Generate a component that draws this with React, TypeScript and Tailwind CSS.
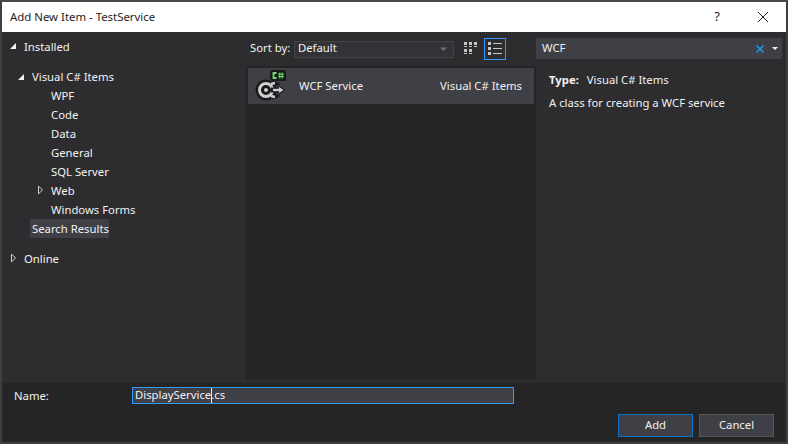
function Arrow({ open }: { open?: boolean }) {
  if (open) {
    return (
      <svg width="8" height="8" viewBox="0 0 8 8" className="block">
        <path d="M7 1V7H1Z" fill="#f1f1f1" />
      </svg>
    )
  }
  return (
    <svg width="8" height="10" viewBox="0 0 8 10" className="block">
      <path d="M2.5 1.2L6.5 5L2.5 8.8Z" fill="none" stroke="#d0d0d0" />
    </svg>
  )
}

function TreeItem({ label, arrow }: { label: string; arrow?: boolean }) {
  return (
    <div className="flex h-[19px] items-center pl-[49px] pt-[2px] relative">
      {arrow && (
        <span className="absolute left-[34px] top-[4px]">
          <Arrow />
        </span>
      )}
      {label}
    </div>
  )
}

function WcfIcon() {
  return (
    <svg width="32" height="32" viewBox="0 0 32 32">
      <rect x="16" y="0" width="17" height="11" rx="3" fill="#1a1a1a" />
      <path d="M22.5 3H19.5V8H22.5" fill="none" stroke="#6fe06f" strokeWidth="1.8" />
      <path d="M24 4.2H30M24 6.6H30M25.8 2.5V8.5M28.2 2.5V8.5" stroke="#6fe06f" strokeWidth="1" />
      <circle cx="12" cy="20" r="10.5" fill="#1a1a1a" />
      <path d="M18 12L22 14L18 16M18 28L22 26L18 24" fill="none" stroke="#1a1a1a" strokeWidth="4" />
      <circle cx="12" cy="20" r="6.5" fill="none" stroke="#cfcfcf" strokeWidth="3" />
      <circle cx="12" cy="20" r="2" fill="#cfcfcf" />
      <path d="M17 14L21 13M17 26L21 27" stroke="#cfcfcf" strokeWidth="2.6" />
      <path d="M17 20H26" stroke="#1a1a1a" strokeWidth="5" />
      <path d="M19 20H26" stroke="#cfcfcf" strokeWidth="2.4" />
      <path d="M25 15.5L31 20L25 24.5Z" fill="#1a1a1a" />
      <path d="M25 17L29.5 20L25 23Z" fill="#cfcfcf" />
    </svg>
  )
}

export default function App() {
  return (
    <div className="w-[788px] h-[444px] flex flex-col border-2 border-[#3f3f41] border-t-[#4a4a4a] bg-[#2d2d30] text-[#f1f1f1] text-[11.3px] font-['Noto_Sans','Open_Sans',sans-serif] overflow-hidden">
      {/* Title bar */}
      <div className="h-[30px] shrink-0 bg-white text-[#1e1e1e] flex items-center justify-between pl-[8px]">
        <span className="text-[11.4px]">Add New Item - TestService</span>
        <div className="flex items-center">
          <span className="w-[46px] text-center text-[13px]">?</span>
          <svg width="46" height="30" viewBox="0 0 46 30">
            <path d="M18 10L28 20M28 10L18 20" stroke="#1e1e1e" strokeWidth="1" />
          </svg>
        </div>
      </div>

      {/* Body */}
      <div className="flex h-[351px] shrink-0">
        {/* Tree */}
        <div className="w-[244px] shrink-0 pt-[5px]">
          <div className="flex h-[19px] items-center pl-[22px] pt-[2px] relative">
            <span className="absolute left-[7px] top-[5px]">
              <Arrow open />
            </span>
            Installed
          </div>
          <div className="mt-[11px]">
            <div className="flex h-[19px] items-center pl-[30px] pt-[2px] relative">
              <span className="absolute left-[15px] top-[6px]">
                <Arrow open />
              </span>
              Visual C# Items
            </div>
            <TreeItem label="WPF" />
            <TreeItem label="Code" />
            <TreeItem label="Data" />
            <TreeItem label="General" />
            <TreeItem label="SQL Server" />
            <TreeItem label="Web" arrow />
            <TreeItem label="Windows Forms" />
            <div className="pl-[28px]">
              <div className="h-[19px] w-[79px] bg-[#3f3f46] flex items-center pl-[2px] pt-[2px] whitespace-nowrap">Search Results</div>
            </div>
          </div>
          <div className="mt-[11px] flex h-[19px] items-center pl-[22px] pt-[2px] relative">
            <span className="absolute left-[7px] top-[4px]">
              <Arrow />
            </span>
            Online
          </div>
        </div>

        {/* Center */}
        <div className="w-[290px] shrink-0 flex flex-col">
          <div className="h-[34px] shrink-0 flex items-center pl-[4px]">
            <span className="w-[44px] pb-[2px]">Sort by:</span>
            <div className="w-[160px] h-[17px] border border-[#434346] bg-[#333337] flex items-center justify-between pl-[3px] pr-[2px]">
              <span className="pb-[2px]">Default</span>
              <svg width="10" height="6" viewBox="0 0 10 6" className="mr-[2px]">
                <path d="M1 1.5H8L4.5 5Z" fill="#6f6f73" />
              </svg>
            </div>
            <svg width="16" height="16" viewBox="0 0 16 16" className="ml-[9px]">
              <path d="M1 1h3v3H1zM6 1h3v3H6zM11 1h3v3h-3zM1 5h3v1H1zM6 5h3v1H6zM11 5h3v1h-3zM1 8h3v3H1zM6 8h3v3H6zM1 12h3v1H1zM6 12h3v1H6z" fill="#c8c8c8" />
            </svg>
            <div className="ml-[5px] w-[22px] h-[22px] border border-[#3399ff] flex items-center justify-center">
              <svg width="16" height="14" viewBox="0 0 16 14">
                <path d="M1 0h3v3H1zM1 5h3v3H1zM1 10h3v3H1zM6 1h9v1H6zM6 6h9v1H6zM6 11h9v1H6z" fill="#c8c8c8" />
              </svg>
            </div>
          </div>
          <div className="h-[314px] bg-[#252526] p-[2px]">
            <div className="h-[36px] bg-[#3f3f46] flex items-center">
              <span className="ml-[6px] w-[32px] h-[32px]">
                <WcfIcon />
              </span>
              <span className="ml-[13px]">WCF Service</span>
              <span className="ml-auto mr-[12px]">Visual C# Items</span>
            </div>
          </div>
        </div>

        {/* Details */}
        <div className="flex-1 min-w-0 pt-[6px] pr-[4px]">
          <div className="h-[21px] bg-[#3f3f46] flex items-center pl-[6px] pr-[3px]">
            <span className="flex-1">WCF</span>
            <svg width="10" height="10" viewBox="0 0 10 10">
              <path d="M1.5 1.5L8.5 8.5M8.5 1.5L1.5 8.5" stroke="#1c97ea" strokeWidth="1.6" />
            </svg>
            <svg width="8" height="5" viewBox="0 0 8 5" className="ml-[6px]">
              <path d="M1 1H7L4 4Z" fill="#f1f1f1" />
            </svg>
          </div>
          <div className="pl-[13px] pt-[12px]">
            <div className="h-[18px] flex items-center">
              <span className="font-bold">Type:</span>
              <span className="ml-[8px]">Visual C# Items</span>
            </div>
            <div className="h-[18px] flex items-center mt-[5px]">A class for creating a WCF service</div>
          </div>
        </div>
      </div>

      {/* Footer */}
      <div className="flex-1 bg-[#252526] flex flex-col">
        <div className="flex items-center h-[20px] mt-[2px] pl-[12px]">
          <span className="w-[118px] pt-[2px]">Name:</span>
          <div className="w-[382px] h-[17px] border border-[#3399ff] bg-[#3f3f46] flex items-center pl-[2px]">
            DisplayService
            <span className="w-px h-[15px] bg-[#f1f1f1] -mr-px" />
            .cs
          </div>
        </div>
        <div className="flex justify-end gap-[6px] pr-[12px] mt-[9px]">
          <button className="w-[75px] h-[23px] border border-[#0e70c0] bg-[#3f3f46] text-[#f1f1f1]">Add</button>
          <button className="w-[75px] h-[23px] border border-[#555558] bg-[#3f3f46] text-[#f1f1f1]">Cancel</button>
        </div>
      </div>
    </div>
  )
}
